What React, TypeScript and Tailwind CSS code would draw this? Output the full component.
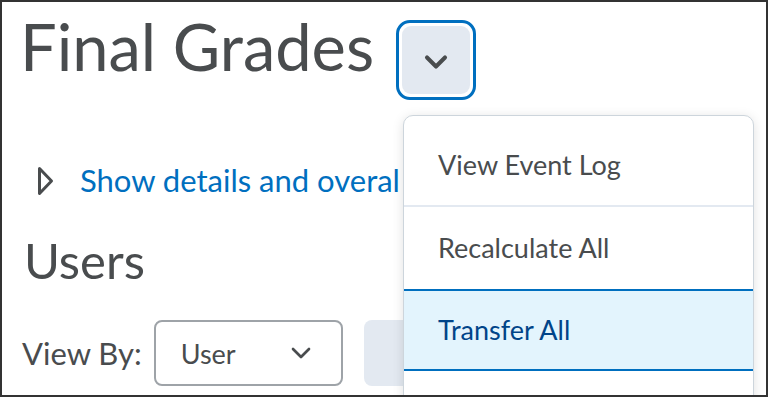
import { ChevronDown } from "lucide-react";

const menuItems = ["View Event Log", "Recalculate All", "Transfer All"];

export default function App() {
  return (
    <div className="relative w-[768px] h-[397px] overflow-hidden border-2 border-[#333] bg-white font-['Lato',sans-serif] text-[#494c4e]">
      {/* Page title + context menu button */}
      <div className="flex items-start pt-[12px] pl-[18px]">
        <h1 className="text-[65px] leading-none">Final Grades</h1>
        <button className="ml-[22px] mt-[6px] w-[80px] h-[80px] rounded-[14px] border-[3px] border-[#006fbf] p-[3px] bg-white">
          <span className="flex w-full h-full items-center justify-center rounded-[9px] bg-[#e3e9f1] pt-[3px]">
            <ChevronDown className="w-[36px] h-[36px] text-[#494c4e]" strokeWidth={2.7} />
          </span>
        </button>
      </div>

      {/* Show details link (runs under the open menu) */}
      <div className="mt-[65px] flex items-center pl-[35px]">
        <svg width="17" height="30" viewBox="0 0 17 30" className="shrink-0">
          <path d="M2.5 2.5 L14.5 15 L2.5 27.5 Z" fill="none" stroke="#494c4e" strokeWidth={3} strokeLinejoin="round" />
        </svg>
        <span className="ml-[26px] w-[321px] overflow-hidden text-[31px] leading-none text-[#006fbf] whitespace-nowrap">
          Show details and overall grade
        </span>
      </div>

      <h2 className="mt-[40px] pl-[22px] text-[49px] leading-none">Users</h2>

      {/* View By row */}
      <div className="mt-[35px] flex items-center pl-[20px]">
        <span className="text-[31px] leading-none">View By:</span>
        <div className="ml-[12px] flex h-[66px] w-[189px] shrink-0 items-center justify-between rounded-[8px] border-2 border-[#9ea3a8] pl-[25px] pr-[24px]">
          <span className="text-[27px] leading-none">User</span>
          <ChevronDown className="w-[32px] h-[32px]" strokeWidth={2} />
        </div>
        <div className="ml-[21px] h-[66px] w-[200px] shrink-0 rounded-[8px] bg-[#e3e9f1]" />
      </div>

      {/* Dropdown menu overlay */}
      <div className="absolute left-[401px] top-[113px] w-[351px] rounded-[10px] border border-[#cdd5dc] bg-white pt-[9px] pb-[40px] shadow-[0_2px_12px_rgba(0,0,0,0.12)]">
        {menuItems.map((item, i) =>
          i === 2 ? (
            <div
              key={item}
              className="flex h-[82px] items-center border-y-2 border-[#006fbf] bg-[#e3f4fd] pl-[34px] pb-[1px] text-[27px] leading-none text-[#004489]"
            >
              {item}
            </div>
          ) : (
            <div
              key={item}
              className={`flex h-[82px] items-center pl-[34px] pb-[1px] text-[27px] leading-none ${i === 0 ? "border-b-2 border-[#e3e9f1]" : ""}`}
            >
              {item}
            </div>
          )
        )}
      </div>
    </div>
  );
}
